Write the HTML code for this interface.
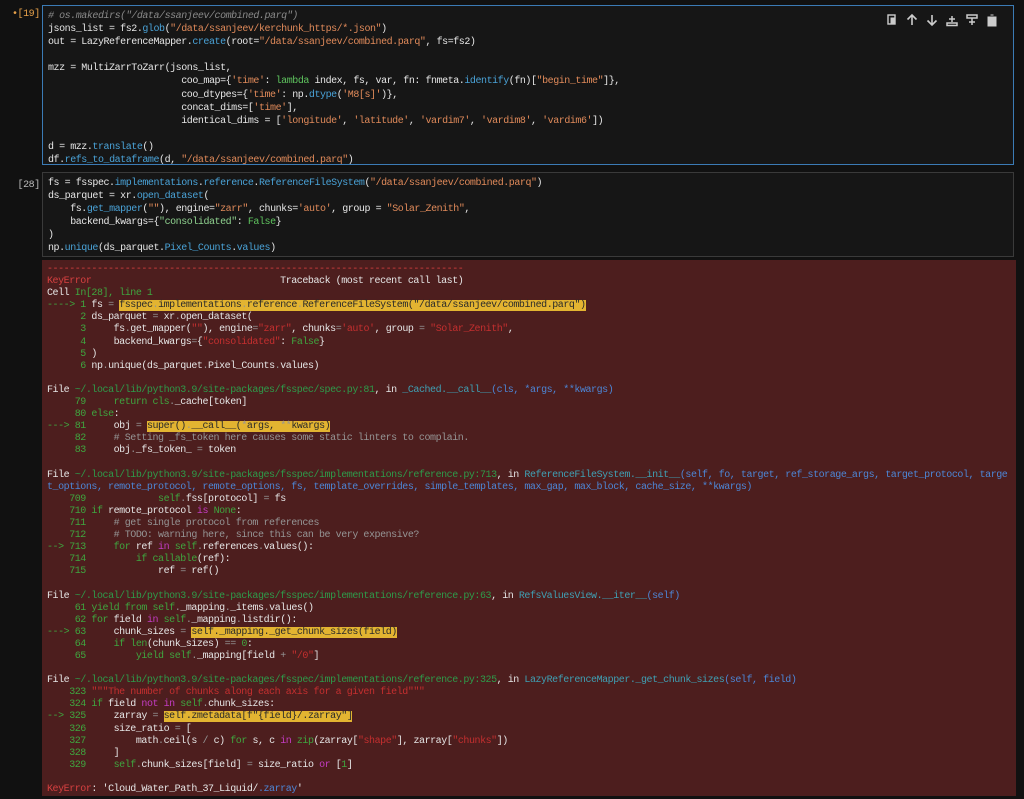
<!DOCTYPE html>
<html><head><meta charset="utf-8"><style>
body{margin:0;background:#111111;width:1024px;height:799px;overflow:hidden;font-family:"Liberation Mono",monospace;font-size:10px;letter-spacing:-0.45px;color:#e6e6e6}
.p{position:absolute;left:12px;font-size:10px}
.cell{position:absolute;left:42px;width:972px;background:#161616;box-sizing:border-box}
pre{margin:0;font:inherit;white-space:pre}
.in pre{line-height:13.1px;padding:4px 0 0 5px}
.c1{top:5px;height:160px;border:1px solid #3b7bb5}
.c2{top:172px;height:85px;border:1px solid #3a3a3a}
.out{position:absolute;left:42px;top:260px;width:974px;height:536px;background:#4d1e1e}
.out pre{line-height:12.1px;padding:4px 0 0 5px}
.cm{color:#8a8a8a;font-style:italic}
.s{color:#e08a5a}.f{color:#4aa3d8}.g{color:#5ec35e}.n{color:#8fd18f}
.tg{color:#3fa63f}.tk{color:#c33cc3}.ts{color:#c42f2f}.tp{color:#2e9b4a}.tf{color:#3fa0b4}.ta{color:#4d86d6}.tc{color:#959595}.te{color:#d64040}
.hl{background:#e3b431;color:#2a2a2a}
.hl .tg,.hl .ts,.hl .tk{color:#2a2a2a}
.tb{position:absolute;top:7px;right:14px;display:flex;gap:6px}
.tb svg{width:14px;height:14px}
</style></head><body>
<div class="p" style="top:9px;color:#e8a24a">•[19]:</div>
<div class="p" style="top:180px;color:#bbb">&nbsp;[28]:</div>
<div class="cell in c1"><pre><span class="cm"># os.makedirs("/data/ssanjeev/combined.parq")</span>
jsons_list = fs2.<span class="f">glob</span>(<span class="s">"/data/ssanjeev/kerchunk_https/*.json"</span>)
out = LazyReferenceMapper.<span class="f">create</span>(root=<span class="s">"/data/ssanjeev/combined.parq"</span>, fs=fs2)

mzz = MultiZarrToZarr(jsons_list,
                        coo_map={<span class="s">'time'</span>: <span class="g">lambda</span> index, fs, var, fn: fnmeta.<span class="f">identify</span>(fn)[<span class="s">"begin_time"</span>]},
                        coo_dtypes={<span class="s">'time'</span>: np.<span class="f">dtype</span>(<span class="s">'M8[s]'</span>)},
                        concat_dims=[<span class="s">'time'</span>],
                        identical_dims = [<span class="s">'longitude'</span>, <span class="s">'latitude'</span>, <span class="s">'vardim7'</span>, <span class="s">'vardim8'</span>, <span class="s">'vardim6'</span>])

d = mzz.<span class="f">translate</span>()
df.<span class="f">refs_to_dataframe</span>(d, <span class="s">"/data/ssanjeev/combined.parq"</span>)</pre>
<div class="tb">
<svg viewBox="0 0 14 14"><rect x="3" y="2" width="7" height="9" fill="none" stroke="#ccc" stroke-width="1.4"/><rect x="5.5" y="4.5" width="5" height="6" fill="#ccc"/></svg>
<svg viewBox="0 0 14 14"><path d="M7 12V2M2.5 6.5L7 2l4.5 4.5" fill="none" stroke="#ccc" stroke-width="1.6"/></svg>
<svg viewBox="0 0 14 14"><path d="M7 2v10M2.5 7.5L7 12l4.5-4.5" fill="none" stroke="#ccc" stroke-width="1.6"/></svg>
<svg viewBox="0 0 14 14"><path d="M7 3v6M4 6h6M2 10h10v2.5H2z" fill="none" stroke="#ccc" stroke-width="1.5"/></svg>
<svg viewBox="0 0 14 14"><path d="M2 2h10v3H2zM7 5v7M4 9h6" fill="none" stroke="#ccc" stroke-width="1.5"/></svg>
<svg viewBox="0 0 14 14"><path d="M3 4h8v9H3zM5.5 2h3" fill="#ccc" stroke="#ccc" stroke-width="1"/></svg>
</div></div>
<div class="cell in c2"><pre>fs = fsspec.<span class="f">implementations</span>.<span class="f">reference</span>.<span class="f">ReferenceFileSystem</span>(<span class="s">"/data/ssanjeev/combined.parq"</span>)
ds_parquet = xr.<span class="f">open_dataset</span>(
    fs.<span class="f">get_mapper</span>(<span class="s">""</span>), engine=<span class="s">"zarr"</span>, chunks=<span class="s">'auto'</span>, group = <span class="s">"Solar_Zenith"</span>,
    backend_kwargs={<span class="n">"consolidated"</span>: <span class="g">False</span>}
)
np.<span class="f">unique</span>(ds_parquet.<span class="f">Pixel_Counts</span>.<span class="f">values</span>)</pre></div>
<div class="out"><pre><span class="te">---------------------------------------------------------------------------</span>
<span class="te">KeyError</span>                                  Traceback (most recent call last)
Cell <span class="tg">In[28], line 1</span>
<span class="tg">----&gt; 1</span> fs <span class="tc">=</span> <span class="hl">fsspec<span class="tc">.</span>implementations<span class="tc">.</span>reference<span class="tc">.</span>ReferenceFileSystem(<span class="ts">"/data/ssanjeev/combined.parq"</span>)</span>
<span class="tg">      2</span> ds_parquet <span class="tc">=</span> xr<span class="tc">.</span>open_dataset(
<span class="tg">      3</span>     fs<span class="tc">.</span>get_mapper(<span class="ts">""</span>), engine<span class="tc">=</span><span class="ts">"zarr"</span>, chunks<span class="tc">=</span><span class="ts">'auto'</span>, group <span class="tc">=</span> <span class="ts">"Solar_Zenith"</span>,
<span class="tg">      4</span>     backend_kwargs<span class="tc">=</span>{<span class="ts">"consolidated"</span>: <span class="tg">False</span>}
<span class="tg">      5</span> )
<span class="tg">      6</span> np<span class="tc">.</span>unique(ds_parquet<span class="tc">.</span>Pixel_Counts<span class="tc">.</span>values)

File <span class="tp">~/.local/lib/python3.9/site-packages/fsspec/spec.py:81</span>, in <span class="tf">_Cached.__call__</span><span class="ta">(cls, *args, **kwargs)</span>
<span class="tg">     79</span>     <span class="tg">return</span> <span class="tg">cls</span><span class="tc">.</span>_cache[token]
<span class="tg">     80</span> <span class="tg">else</span>:
<span class="tg">---&gt; 81</span>     obj <span class="tc">=</span> <span class="hl"><span class="tg">super</span>()<span class="tc">.</span>__call__(<span class="tc">*</span>args, <span class="tc">**</span>kwargs)</span>
<span class="tg">     82</span>     <span class="tc"># Setting _fs_token here causes some static linters to complain.</span>
<span class="tg">     83</span>     obj<span class="tc">.</span>_fs_token_ <span class="tc">=</span> token

File <span class="tp">~/.local/lib/python3.9/site-packages/fsspec/implementations/reference.py:713</span>, in <span class="tf">ReferenceFileSystem.__init__</span><span class="ta">(self, fo, target, ref_storage_args, target_protocol, targe</span>
<span class="ta">t_options, remote_protocol, remote_options, fs, template_overrides, simple_templates, max_gap, max_block, cache_size, **kwargs)</span>
<span class="tg">    709</span>             <span class="tg">self</span><span class="tc">.</span>fss[protocol] <span class="tc">=</span> fs
<span class="tg">    710</span> <span class="tg">if</span> remote_protocol <span class="tk">is</span> <span class="tg">None</span>:
<span class="tg">    711</span>     <span class="tc"># get single protocol from references</span>
<span class="tg">    712</span>     <span class="tc"># TODO: warning here, since this can be very expensive?</span>
<span class="tg">--&gt; 713</span>     <span class="tg">for</span> ref <span class="tk">in</span> <span class="tg">self</span><span class="tc">.</span>references<span class="tc">.</span>values():
<span class="tg">    714</span>         <span class="tg">if</span> <span class="tg">callable</span>(ref):
<span class="tg">    715</span>             ref <span class="tc">=</span> ref()

File <span class="tp">~/.local/lib/python3.9/site-packages/fsspec/implementations/reference.py:63</span>, in <span class="tf">RefsValuesView.__iter__</span><span class="ta">(self)</span>
<span class="tg">     61</span> <span class="tg">yield</span> <span class="tg">from</span> <span class="tg">self</span><span class="tc">.</span>_mapping<span class="tc">.</span>_items<span class="tc">.</span>values()
<span class="tg">     62</span> <span class="tg">for</span> field <span class="tk">in</span> <span class="tg">self</span><span class="tc">.</span>_mapping<span class="tc">.</span>listdir():
<span class="tg">---&gt; 63</span>     chunk_sizes <span class="tc">=</span> <span class="hl"><span class="tg">self</span>.<span>_mapping</span>.<span>_get_chunk_sizes(field)</span></span>
<span class="tg">     64</span>     <span class="tg">if</span> <span class="tg">len</span>(chunk_sizes) <span class="tc">==</span> <span class="tg">0</span>:
<span class="tg">     65</span>         <span class="tg">yield</span> <span class="tg">self</span><span class="tc">.</span>_mapping[field <span class="tc">+</span> <span class="ts">"/0"</span>]

File <span class="tp">~/.local/lib/python3.9/site-packages/fsspec/implementations/reference.py:325</span>, in <span class="tf">LazyReferenceMapper._get_chunk_sizes</span><span class="ta">(self, field)</span>
<span class="tg">    323</span> <span class="ts">"""The number of chunks along each axis for a given field"""</span>
<span class="tg">    324</span> <span class="tg">if</span> field <span class="tk">not</span> <span class="tk">in</span> <span class="tg">self</span><span class="tc">.</span>chunk_sizes:
<span class="tg">--&gt; 325</span>     zarray <span class="tc">=</span> <span class="hl"><span class="tg">self</span>.zmetadata[<span class="ts">f"{field}/.zarray"</span>]</span>
<span class="tg">    326</span>     size_ratio <span class="tc">=</span> [
<span class="tg">    327</span>         math<span class="tc">.</span>ceil(s <span class="tc">/</span> c) <span class="tg">for</span> s, c <span class="tk">in</span> <span class="tg">zip</span>(zarray[<span class="ts">"shape"</span>], zarray[<span class="ts">"chunks"</span>])
<span class="tg">    328</span>     ]
<span class="tg">    329</span>     <span class="tg">self</span><span class="tc">.</span>chunk_sizes[field] <span class="tc">=</span> size_ratio <span class="tk">or</span> [<span class="tg">1</span>]

<span class="te">KeyError</span>: 'Cloud_Water_Path_37_Liquid/<span class="ta">.zarray</span>'</pre></div>
</body></html>
